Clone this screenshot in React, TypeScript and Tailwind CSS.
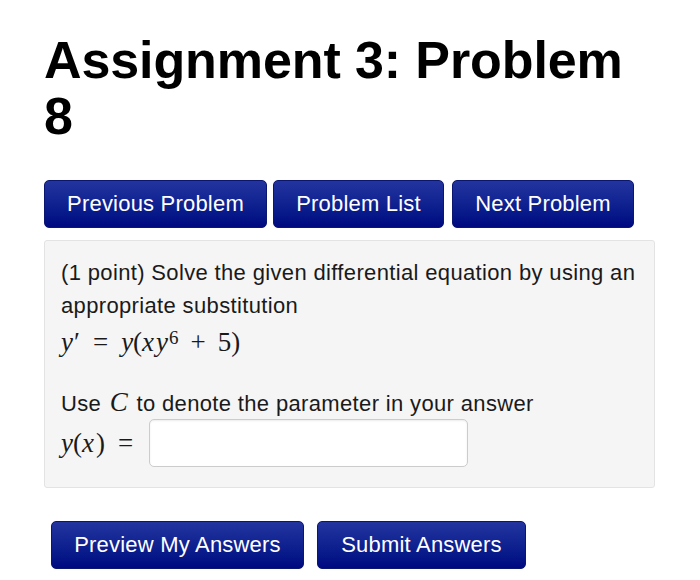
export default function App() {
  const btn =
    'h-[48px] rounded-[5px] border border-[#0b1670] bg-gradient-to-b from-[#23349f] to-[#000880] text-white text-[22px] tracking-[0.2px] leading-none whitespace-nowrap'
  const math = { fontFamily: '"Liberation Serif", "Times New Roman", serif' }

  return (
    <div className="w-[700px] h-[580px] bg-white overflow-hidden font-['Liberation_Sans',Arial,sans-serif] text-black">
      <div className="pl-[44px] pt-[32px] w-[656px]">
        <h1 className="text-[52px] font-bold leading-[56px] tracking-[-0.1px]">
          <span className="block whitespace-nowrap">Assignment 3: Problem</span>
          <span className="block">8</span>
        </h1>

        <div className="flex gap-[6px] mt-[36px]">
          <button className={`${btn} w-[223px]`}>Previous Problem</button>
          <button className={`${btn} w-[171px]`}>Problem List</button>
          <button className={`${btn} w-[182px] ml-[2px]`}>Next Problem</button>
        </div>

        <div className="mt-[12px] w-[611px] h-[248px] bg-[#f5f5f5] border border-[#e3e3e3] rounded-[3px] pl-[16px] pr-[4px] pt-[15px] text-[22px] tracking-[0.35px] leading-[33px] text-[#1a1a1a]">
          <p>(1 point) Solve the given differential equation by using an appropriate substitution</p>
          <p style={math} className="text-[27px] leading-[40px] italic tracking-normal">
            y<span className="not-italic pl-[1px]">′</span>
            <span className="not-italic px-[13px]">=</span>y<span className="not-italic">(</span>x
            <span className="pl-[2px]">y</span>
            <sup className="not-italic text-[19px] relative top-[-7px] pl-[1px]">6</sup>
            <span className="not-italic px-[12px]">+</span>
            <span className="not-italic">5)</span>
          </p>
          <p className="mt-[24px]">
            Use <span style={math} className="italic text-[27px] px-[2px]">C</span> to denote the parameter in your answer
          </p>
          <div className="flex items-center gap-[16px] mt-[-1px]">
            <span style={math} className="italic text-[27px] tracking-normal">
              y<span className="not-italic">(</span>x<span className="not-italic pl-[2px]">)</span>
              <span className="not-italic pl-[13px]">=</span>
            </span>
            <input className="w-[319px] h-[48px] bg-white border border-[#cccccc] rounded-[5px] shadow-[inset_0_1px_2px_rgba(0,0,0,0.08)]" />
          </div>
        </div>

        <div className="flex gap-[13px] mt-[33px] pl-[7px]">
          <button className={`${btn} w-[253px]`}>Preview My Answers</button>
          <button className={`${btn} w-[209px]`}>Submit Answers</button>
        </div>
      </div>
    </div>
  )
}
